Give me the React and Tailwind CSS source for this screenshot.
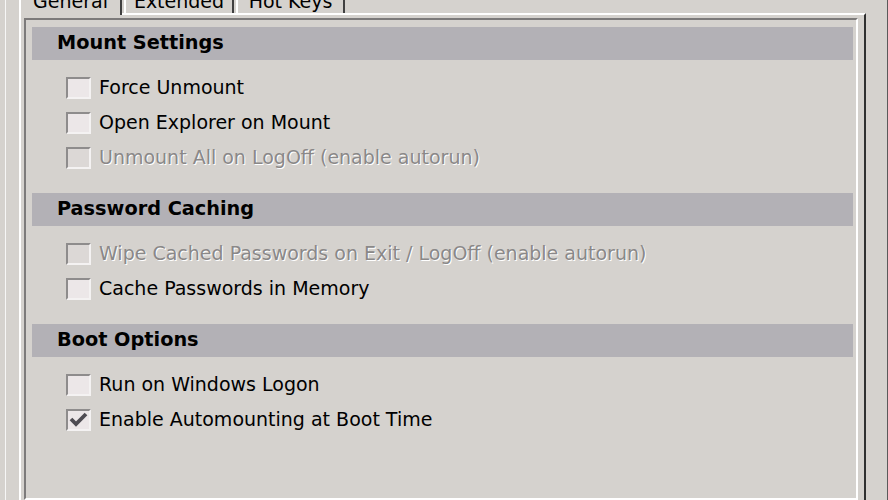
import React from "react";

const sections = [
  {
    title: "Mount Settings",
    items: [
      { label: "Force Unmount" },
      { label: "Open Explorer on Mount" },
      { label: "Unmount All on LogOff (enable autorun)", disabled: true },
    ],
  },
  {
    title: "Password Caching",
    items: [
      { label: "Wipe Cached Passwords on Exit / LogOff (enable autorun)", disabled: true },
      { label: "Cache Passwords in Memory" },
    ],
  },
  {
    title: "Boot Options",
    items: [
      { label: "Run on Windows Logon" },
      { label: "Enable Automounting at Boot Time", checked: true },
    ],
  },
];

const Checkbox = ({ checked, disabled }) => (
  <div
    className={`w-[25px] h-[22px] shrink-0 border-2 border-t-[#8e8c8c] border-l-[#8e8c8c] border-b-[#f4f2f2] border-r-[#f4f2f2] flex items-center justify-center ${
      disabled ? "bg-[#dcd8d6]" : "bg-[#ece7e8]"
    }`}
  >
    {checked && (
      <svg width="19" height="15" viewBox="0 0 19 15">
        <polyline
          points="2,7 7,12 17,2"
          fill="none"
          stroke="#4e4c52"
          strokeWidth="3.8"
        />
      </svg>
    )}
  </div>
);

const Row = ({ label, checked, disabled }) => (
  <div className="h-[35px] flex items-center pl-[34px] gap-[8px]">
    <Checkbox checked={checked} disabled={disabled} />
    <span
      className={
        disabled
          ? "text-[#8a8888] [text-shadow:1px_1px_0_#ffffff]"
          : "text-black"
      }
    >
      {label}
    </span>
  </div>
);

const Tab = ({ label, selected }) => (
  <div
    className={`flex justify-center border-l-2 border-l-white border-r-2 border-r-[#404040] bg-[#d5d2ce] ${
      selected
        ? "relative z-10 w-[103px] h-[37px] mb-[-2px] pt-[13px]"
        : "h-[35px] pt-[13px]"
    }`}
  >
    <span className="leading-[20px]">{label}</span>
  </div>
);

export default function App() {
  return (
    <div className="w-[888px] h-[500px] overflow-hidden bg-[#d5d2ce] border-r border-r-[#5a5a5a] text-[19px] text-black font-['DejaVu_Sans',Verdana,sans-serif]">
      <div className="ml-[5px] h-full border-l border-l-[#f6f6f6] pl-[13px] flex flex-col">
        {/* tab strip */}
        <div className="h-[13px] flex items-end gap-[2px]">
          <Tab label="General" selected />
          <div className="w-[110px]">
            <Tab label="Extended" />
          </div>
          <div className="w-[109px]">
            <Tab label="Hot Keys" />
          </div>
        </div>

        {/* tab page */}
        <div className="w-[847px] flex-1 border-t-2 border-t-white border-l-2 border-l-white border-r-2 border-r-[#303030] pt-[3px] pl-[3px] pr-[6px] flex flex-col">
          <div className="flex-1 border-2 border-t-[#7c7a7a] border-l-[#7c7a7a] border-b-white border-r-white pt-[7px] pl-[6px] pr-[3px]">
            {sections.map((s) => (
              <div key={s.title} className="pb-[18px]">
                <div className="h-[33px] bg-[#b3b1b6] flex items-center pl-[25px] font-bold text-[19.3px]">
                  {s.title}
                </div>
                <div className="pt-[10px]">
                  {s.items.map((it) => (
                    <Row key={it.label} {...it} />
                  ))}
                </div>
              </div>
            ))}
          </div>
        </div>
      </div>
    </div>
  );
}
